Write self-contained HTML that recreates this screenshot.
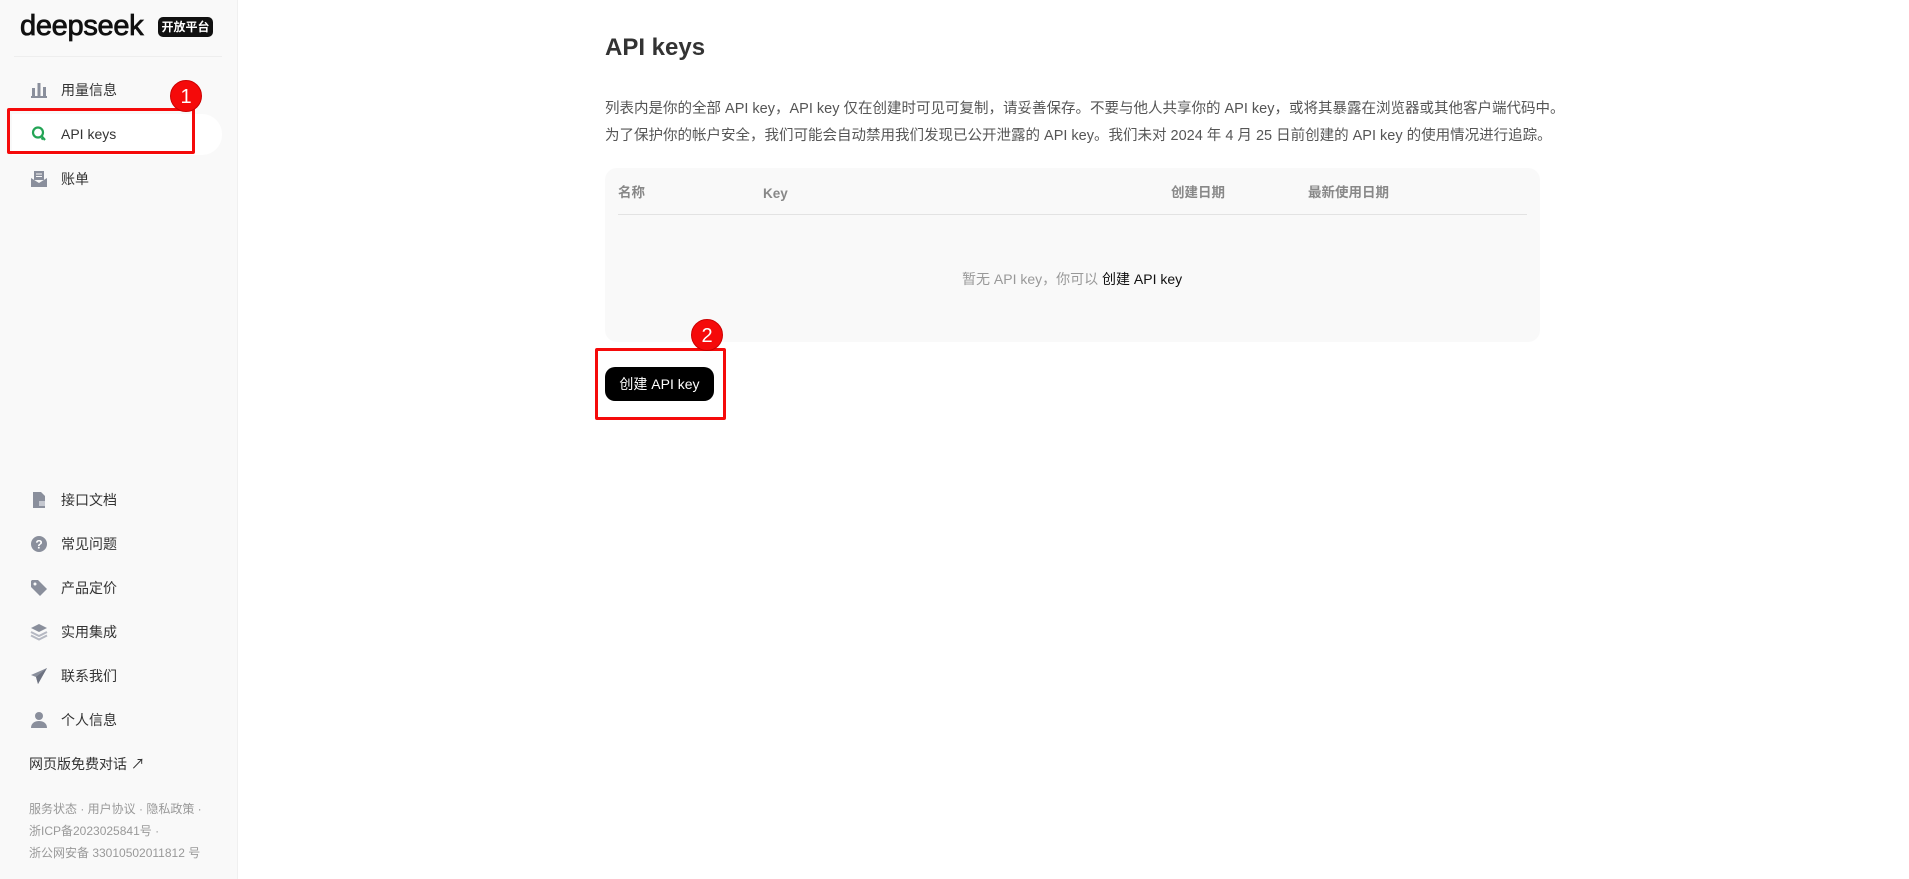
<!DOCTYPE html>
<html><head><meta charset="utf-8"><style>
*{margin:0;padding:0;box-sizing:border-box}
body{width:1909px;height:879px;background:#fff;font-family:"Liberation Sans","Noto Sans CJK SC",sans-serif;position:relative;overflow:hidden;color:#333}
.side{position:absolute;left:0;top:0;width:237px;height:879px;background:#f9f9f9}
.abs{position:absolute}
.logo{left:20px;top:10px;font-size:29px;font-weight:normal;color:#111;letter-spacing:-0.3px;-webkit-text-stroke:0.8px #111}
.badge{left:158px;top:17px;width:55px;height:20px;background:#111;color:#fff;border-radius:5px;font-size:12px;font-weight:bold;text-align:center;line-height:20px}
.div{left:14px;top:56px;width:208px;height:1px;background:#eee}
.item{position:absolute;left:30px;font-size:14px;color:#333;display:flex;align-items:center;height:20px}
.item svg{width:18px;height:18px;margin-right:13px}
.active{left:12px;top:114px;width:210px;height:41px;background:#fff;border-radius:0 20px 20px 0}
.foot{left:29px;font-size:12px;color:#999}
.red{position:absolute;border:3px solid #f50a0a;border-radius:2px}
.num{position:absolute;width:32px;height:32px;border-radius:50%;background:#f50a0a;color:#fff;font-size:20px;text-align:center;line-height:32px;border:1px solid #c00}
.title{left:605px;top:34px;font-size:24px;font-weight:bold;color:#333}
.p{left:605px;font-size:14.5px;color:#555;white-space:nowrap}
.tbl{left:605px;top:168px;width:935px;height:174px;background:#f9f9f9;border-radius:12px}
.th{position:absolute;top:183px;font-size:13.5px;font-weight:bold;color:#888;line-height:20px;height:20px}
.btn{left:605px;top:367px;width:109px;height:34px;background:#000;color:#fff;border-radius:10px;font-size:14px;text-align:center;line-height:34px}
</style></head><body>
<div class="side">
<div class="abs logo">deepseek</div>
<div class="abs badge">开放平台</div>
<div class="abs div"></div>
<div class="abs active"></div>
<div class="item" style="top:80px"><svg viewBox="0 0 18 18"><rect x="2" y="7" width="3" height="9" fill="#8a8f9c"/><rect x="7.5" y="2" width="3" height="14" fill="#8a8f9c"/><rect x="13" y="6" width="3" height="10" fill="#8a8f9c"/><rect x="1" y="15" width="16" height="2" fill="#8a8f9c"/></svg>用量信息</div>
<div class="item" style="top:124px"><svg viewBox="0 0 18 18"><circle cx="8" cy="7.5" r="5" fill="none" stroke="#23a455" stroke-width="2.2"/><path d="M11.5 11 L15 15 M13 13 L11.5 14.5" stroke="#23a455" stroke-width="2.2" fill="none"/></svg>API keys</div>
<div class="item" style="top:169px"><svg viewBox="0 0 18 18"><rect x="4" y="1" width="10" height="9" fill="#8a8f9c"/><path d="M1 8 L9 13 L17 8 V17 H1Z" fill="#8a8f9c"/><path d="M6 4h6M6 6.5h6" stroke="#f9f9f9" stroke-width="1"/></svg>账单</div>
<div class="item" style="top:490px"><svg viewBox="0 0 18 18"><path d="M3 1h8l4 4v12H3z" fill="#8a8f9c"/><rect x="9" y="10" width="6" height="5" fill="#c5c8d0"/></svg>接口文档</div>
<div class="item" style="top:534px"><svg viewBox="0 0 18 18"><circle cx="9" cy="9" r="8" fill="#8a8f9c"/><text x="9" y="13.5" font-size="12" font-weight="bold" fill="#fff" text-anchor="middle" font-family="Liberation Sans">?</text></svg>常见问题</div>
<div class="item" style="top:578px"><svg viewBox="0 0 18 18"><path d="M1 2v6l9 9 7-7-9-9H2z" fill="#8a8f9c"/><circle cx="5" cy="5" r="1.5" fill="#f9f9f9"/></svg>产品定价</div>
<div class="item" style="top:622px"><svg viewBox="0 0 18 18"><path d="M9 1l8 4-8 4-8-4z" fill="#8a8f9c"/><path d="M1 9l8 4 8-4M1 12.5l8 4 8-4" stroke="#b5b8c2" stroke-width="2" fill="none"/></svg>实用集成</div>
<div class="item" style="top:666px"><svg viewBox="0 0 18 18"><path d="M17 1L1 8l5 2 2 7z" fill="#8a8f9c"/><path d="M17 1L6 10l2 7z" fill="#6d7280"/></svg>联系我们</div>
<div class="item" style="top:710px"><svg viewBox="0 0 18 18"><circle cx="9" cy="5" r="4" fill="#8a8f9c"/><path d="M1 17c0-5 4-7 8-7s8 2 8 7z" fill="#8a8f9c"/></svg>个人信息</div>
<div class="abs" style="left:29px;top:754px;font-size:14px;color:#333">网页版免费对话 ↗</div>
<div class="abs foot" style="top:800px">服务状态 · 用户协议 · 隐私政策 ·</div>
<div class="abs foot" style="top:822px">浙ICP备2023025841号 ·</div>
<div class="abs foot" style="top:844px">浙公网安备 33010502011812 号</div>
</div>
<div style="position:absolute;left:237px;top:0;width:1px;height:879px;background:#f0f0f0"></div>
<div class="red" style="left:7px;top:108px;width:188px;height:46px"></div>
<div class="num" style="left:170px;top:80px">1</div>

<div class="abs title">API keys</div>
<div class="abs p" style="top:97px">列表内是你的全部 API key，API key 仅在创建时可见可复制，请妥善保存。不要与他人共享你的 API key，或将其暴露在浏览器或其他客户端代码中。</div>
<div class="abs p" style="top:124px">为了保护你的帐户安全，我们可能会自动禁用我们发现已公开泄露的 API key。我们未对 2024 年 4 月 25 日前创建的 API key 的使用情况进行追踪。</div>
<div class="abs tbl"></div>
<div class="th" style="left:618px">名称</div>
<div class="th" style="left:763px;top:184px">Key</div>
<div class="th" style="left:1171px">创建日期</div>
<div class="th" style="left:1308px">最新使用日期</div>
<div class="abs" style="left:618px;top:214px;width:909px;height:1px;background:#e3e3e3"></div>
<div class="abs" style="left:962px;top:269px;font-size:14px;color:#999">暂无 API key，你可以 <span style="color:#111">创建 API key</span></div>
<div class="abs btn">创建 API key</div>
<div class="red" style="left:595px;top:348px;width:131px;height:72px"></div>
<div class="num" style="left:691px;top:319px">2</div>
</body></html>
